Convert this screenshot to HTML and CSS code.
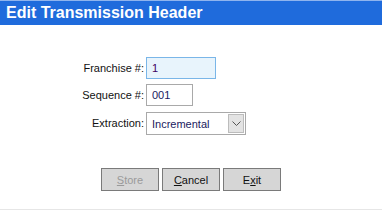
FILE: index.html
```html
<!DOCTYPE html>
<html lang="en">
<head>
    <meta charset="UTF-8">
    <title>Edit Transmission Header</title>
    <link rel="stylesheet" href="styles.css">
</head>
<body>
    <div class="title-bar">Edit Transmission Header</div>

    <div class="form">
        <label for="franchise">Franchise #:</label>
        <input id="franchise" class="field focused" type="text" value="1">

        <label for="sequence">Sequence #:</label>
        <input id="sequence" class="field short" type="text" value="001">

        <label for="extraction">Extraction:</label>
        <div class="select">
            <span class="select-value">Incremental</span>
            <span class="select-btn">
                <svg width="9" height="6" viewBox="0 0 9 6"><path d="M0.5 0.5 L4.5 4.5 L8.5 0.5" fill="none" stroke="#555" stroke-width="1"/></svg>
            </span>
        </div>
    </div>

    <div class="buttons">
        <button disabled><u>S</u>tore</button>
        <button><u>C</u>ancel</button>
        <button>E<u>x</u>it</button>
    </div>

    <div class="footer-line"></div>
</body>
</html>
```

FILE: styles.css
```css
body, html {
    margin: 0;
    padding: 0;
    background: #fff;
    font-family: 'Liberation Sans', Arial, sans-serif;
    font-size: 11px;
    color: #000;
}
.title-bar {
    border-top: 1px solid #8fb4ee;
    background: #1f6bdc;
    color: #fff;
    font-weight: bold;
    font-size: 16px;
    line-height: 24px;
    height: 24px;
    padding-left: 6px;
}
.form {
    display: grid;
    grid-template-columns: 144px auto;
    column-gap: 2px;
    row-gap: 5px;
    align-items: center;
    justify-items: start;
    margin-top: 32px;
}
.form label {
    justify-self: end;
    color: #111;
}
.field {
    box-sizing: border-box;
    height: 22px;
    width: 70px;
    border: 1px solid #a9a9a9;
    padding: 0 5px;
    font-family: inherit;
    font-size: 11px;
    color: #1a1a60;
    outline: none;
}
.field.focused {
    border-color: #7ab6e8;
    background: #e8f4fc;
    color: #400060;
}
.field.short {
    width: 47px;
}
.select {
    box-sizing: border-box;
    width: 100px;
    height: 23px;
    margin-top: 1px;
    border: 1px solid #a9a9a9;
    display: flex;
    align-items: center;
    justify-content: space-between;
    padding: 0 1px 0 5px;
    color: #1a1a60;
}
.select-btn {
    box-sizing: border-box;
    width: 16px;
    height: 19px;
    background: #e3e3e3;
    border: 1px solid #bcbcbc;
    display: flex;
    align-items: center;
    justify-content: center;
}
.buttons {
    display: flex;
    justify-content: center;
    gap: 3px;
    margin-top: 33px;
}
button {
    box-sizing: border-box;
    width: 58px;
    height: 23px;
    background: #d6d6d6;
    border: 1px solid #7a7a7a;
    border-radius: 0;
    font-family: inherit;
    font-size: 11px;
    color: #111;
    padding: 0;
}
button:disabled {
    color: #9a9a9a;
}
.footer-line {
    margin-top: 18px;
    border-top: 1px solid #e6e6e6;
}
```
